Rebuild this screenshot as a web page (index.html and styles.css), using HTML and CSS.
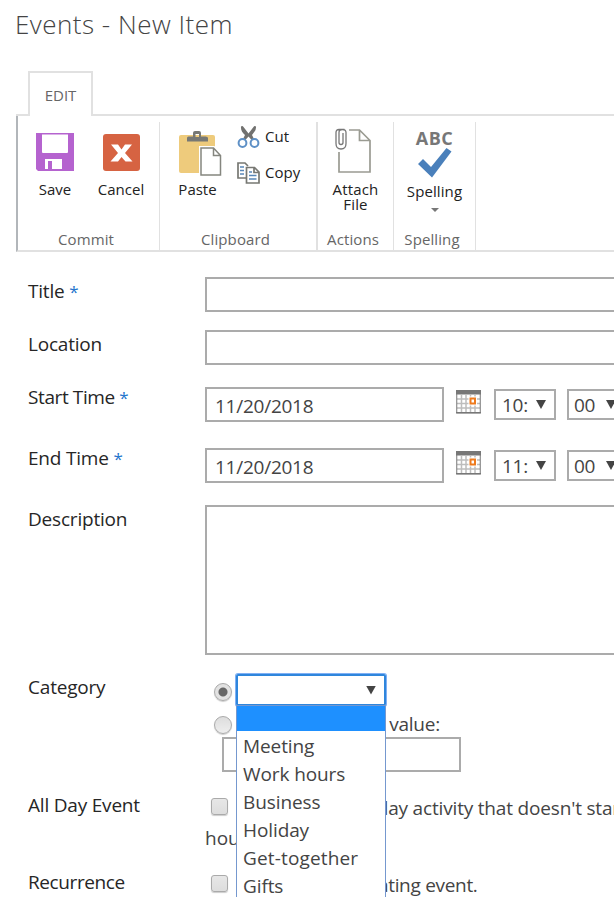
FILE: index.html
```html
<!DOCTYPE html>
<html lang="en">
<head>
<meta charset="utf-8">
<title>Events - New Item</title>
<link rel="stylesheet" href="styles.css">
</head>
<body>
<svg class="defs" width="0" height="0">
  <symbol id="calendar" viewBox="0 0 25 24">
    <path fill="#fff" d="M1 1h23v22H1z"/>
    <path fill="none" stroke="#bdbdbd" stroke-width="1.5" d="M5.5 5v17M10 5v17M14.500 5v17M19 5v17M1 9h23M1 13.500h23M1 18h23"/>
    <path fill="none" stroke="#777" d="M.75.75h23.500v22H.75z"/>
    <path fill="#777" d="M0 0h25v4.500H0zM0 22h25v1.500H0z"/>
    <path fill="#fff" stroke="#fff" stroke-width="4" d="M14.500 8.500h4.500v5h-4.500z"/>
    <path fill="#fff" stroke="#ee7b1e" stroke-width="2" d="M14.500 8.500h4.500v5h-4.500z"/>
  </symbol>
</svg>
<h1 class="page-title">Events - New Item</h1>
<nav class="tabs"><div class="tab">EDIT</div></nav>
<section class="ribbon">
  <div class="group commit">
    <div class="tools">
      <div class="tool save">
        <svg width="40" height="40" viewBox="0 0 40 40"><path fill="#b563cf" d="M1 1h38v38H3l-2-2z"/><path fill="#fff" d="M7 2.500h26v17.500q0 1-1 1H8q-1 0-1-1zM10 27h17v10H17v-8h-4v8h-3z"/></svg>
        <span>Save</span>
      </div>
      <div class="tool cancel">
        <svg width="40" height="40" viewBox="0 0 40 40"><rect x="2" y="2" width="37" height="37" rx="3" fill="#d66342"/><path fill="#fff" d="M10 12.500h7l3.500 5 3.500-5h7L24 21l7.500 8.500h-7L20.500 25 17 29.500h-7.500L17 21z"/></svg>
        <span>Cancel</span>
      </div>
    </div>
    <div class="caption">Commit</div>
  </div>
  <div class="group clipboard">
    <div class="tools">
      <div class="tool paste">
        <svg width="44" height="46" viewBox="0 0 44 46"><rect x="0" y="4" width="36" height="38" rx="2" fill="#eecb7c"/><path fill="#777874" fill-rule="evenodd" d="M8 10.500V7q0-1.500 1.500-1.500H14V2q0-2 2-2h4q2 0 2 2v3.500h4.500Q29 5.500 29 7v3.500zM16.500 3v3h3.500V3z"/><path fill="#fff" stroke="#fff" stroke-width="4" d="M22 17h12.500l7 7.500V44H22z"/><path fill="#fff" stroke="#85867f" stroke-width="1.500" d="M22 17h12.500l7 7.500V44H22zM34.500 17v7.500h7"/></svg>
        <span>Paste</span>
      </div>
      <div class="small-tools">
        <div class="small-tool">
          <svg width="23" height="24" viewBox="0 0 23 24"><path fill="#71716f" d="M4 1.500q1.500-1 2.500.5l5 6.500 5-6.500q1-1.500 2.500-.5.500 4-4 8.500l2.500 5-2 1-4-4.500-4 4.500-2-1L8 10Q3.500 6 4 1.500z"/><g fill="#fff" stroke="#5e90c6" stroke-width="2"><circle cx="5.500" cy="18" r="3.900"/><circle cx="17.500" cy="18" r="3.900"/></g></svg>
          <span>Cut</span>
        </div>
        <div class="small-tool">
          <svg width="23" height="24" viewBox="0 0 23 24"><g fill="#fff" stroke="#777873" stroke-width="1.700"><path d="M9 17H1V2h7l3 3"/><path d="M9.500 6.500h8l4.500 4.500v11H9.500zM17 6.500v5h5"/></g><path fill="none" stroke="#5887b8" stroke-width="1.700" d="M3 6h4M3 9.500h4M3 13h4M12 11h3M12 14.500h7.500M12 18h7.500"/></svg>
          <span>Copy</span>
        </div>
      </div>
    </div>
    <div class="caption">Clipboard</div>
  </div>
  <div class="group actions">
    <div class="tools">
      <div class="tool attach">
        <svg width="38" height="46" viewBox="0 0 38 46"><path fill="#fff" stroke="#9a9b92" stroke-width="1.700" d="M4 24v20h31V12.500L24.500 2H14M24.500 2v10.500H35"/><path fill="none" stroke="#777" stroke-width="1.300" d="M9.500 1.500H4q-3 0-3 3v11q0 5.500 5 5.500t5-5.500v-11q0-3-3.500-3T4 4.500v10q0 2 2 2t2-2V5"/></svg>
        <span class="tight">Attach</span>
        <span class="tight">File</span>
      </div>
    </div>
    <div class="caption">Actions</div>
  </div>
  <div class="group spelling">
    <div class="tools">
      <div class="tool spell">
        <b class="abc">ABC</b>
        <svg width="34" height="30" viewBox="0 0 34 30"><path fill="#4a80bb" d="M0 16l5-5 8 8L28.500 0l5 3.500L14 29.500z"/></svg>
        <span>Spelling</span>
        <i class="caret"></i>
      </div>
    </div>
    <div class="caption">Spelling</div>
  </div>
</section>
<main class="form">
  <div class="row single"><label>Title <em>*</em></label><div class="text-box wide"></div></div>
  <div class="row single"><label>Location</label><div class="text-box wide"></div></div>
  <div class="row time"><label class="narrow">Start Time <em>*</em></label>
    <div class="date-line"><div class="text-box date">11/20/2018</div><svg class="cal" width="25" height="24"><use href="#calendar"/></svg><div class="select hour">10:<i class="arrow"></i></div><div class="select minute">00<i class="arrow"></i></div></div>
  </div>
  <div class="row time"><label>End Time <em>*</em></label>
    <div class="date-line"><div class="text-box date">11/20/2018</div><svg class="cal" width="25" height="24"><use href="#calendar"/></svg><div class="select hour">11:<i class="arrow"></i></div><div class="select minute">00<i class="arrow"></i></div></div>
  </div>
  <div class="row description"><label>Description</label><div class="text-area"></div></div>
  <div class="row category"><label>Category</label>
    <div class="choices">
      <div class="choice first"><span class="radio on"></span>
        <div class="combo"><i class="arrow"></i>
          <ul class="menu">
            <li class="active"></li>
            <li>Meeting</li>
            <li>Work hours</li>
            <li>Business</li>
            <li>Holiday</li>
            <li class="loose">Get-together</li>
            <li>Gifts</li>
          </ul>
        </div>
      </div>
      <div class="choice second"><span class="radio"></span><span class="own">Specify your own value:</span></div>
      <div class="text-box own-box"></div>
    </div>
  </div>
  <div class="row allday"><label>All Day Event</label>
    <div class="check-text"><span class="checkbox"></span><span class="allday-text">Make this an all-day activity that doesn't start or end at a specific</span><br><span>hour.</span></div>
  </div>
  <div class="row recurrence"><label class="narrow">Recurrence</label>
    <div class="check-text"><span class="checkbox"></span><span class="rec-text">Make this a repeating event.</span></div>
  </div>
</main>
</body>
</html>
```
FILE: styles.css
```css
* { box-sizing: border-box; }
html { height: 897px; overflow: hidden; }
body {
  margin: 0;
  width: 614px;
  height: 897px;
  overflow: hidden;
  background: #fff;
  color: #444;
  font-family: "Open Sans", "Noto Sans", sans-serif;
  font-size: 19px;
}
.defs { position: absolute; }
svg { display: block; flex: none; }
.page-title {
  margin: 0;
  padding: 4px 0 0 15px;
  height: 71px;
  font-size: 26px;
  line-height: 40px;
  font-weight: 300;
  letter-spacing: .48px;
  white-space: nowrap;
}

/* Ribbon */
.tabs { height: 45px; padding-left: 28px; display: flex; position: relative; }
.tabs::before { content: ""; position: absolute; left: 16px; width: 12px; bottom: 0; height: 2px; background: #e1e1e1; }
.tabs::after { content: ""; flex: 1; border-bottom: 2px solid #e1e1e1; }
.tab {
  width: 65px;
  border: 2px solid #e1e1e1;
  border-bottom: 0;
  text-align: center;
  font-size: 15px;
  line-height: 44px;
  letter-spacing: -.1px;
  color: #666;
}
.ribbon {
  display: flex;
  height: 136px;
  margin-left: 16px;
  border-left: 2px solid #b2b6ba;
  border-bottom: 2px solid #e1e1e1;
}
.group {
  display: flex;
  flex-direction: column;
  justify-content: space-between;
  margin-top: 6px;
  border-right: 1px solid #e1e1e1;
  font-size: 15px;
  color: #222;
}
.commit { width: 142px; }
.clipboard { width: 158px; border-right-width: 2px; }
.actions { width: 76px; }
.spelling { width: 82px; }
.tools { display: flex; }
.tool { display: flex; flex-direction: column; align-items: center; white-space: nowrap; }
.tool span { line-height: 20px; }
.caption { color: #666; line-height: 21px; padding-right: 5px; text-align: center; font-size: 15px; letter-spacing: .1px; }
.save { width: 66px; margin-left: 4px; padding: 10px 0 0; }
.cancel { width: 66px; padding-top: 10px; }
.save span, .cancel span { margin-top: 7px; }
.paste { width: 44px; margin-left: 19px; padding-top: 9px; }
.paste span { margin: 2px 7px 0 0; }
.small-tools { display: flex; flex-direction: column; padding: 3px 0 0 14px; gap: 12px; }
.small-tool { display: flex; align-items: center; gap: 5px; height: 24px; }
.small-tool span { line-height: 20px; margin-top: -2px; }
.attach { width: 75px; padding-top: 6px; }
.attach svg { margin-right: 4px; margin-bottom: 8px; }
.tool .tight { line-height: 15px; letter-spacing: .15px; }
.spell { width: 81px; padding-top: 6px; }
.abc { color: #777; font-size: 18px; line-height: 21px; font-weight: 700; letter-spacing: .5px; }
.spell svg { margin-top: -1px; }
.spell span { margin-top: 3px; letter-spacing: .1px; }
.caret { border: 4px solid transparent; border-top-color: #777; border-bottom: 0; margin-top: 7px; }

/* Form */
.form { padding: 25px 0 0 28px; }
.row { display: grid; grid-template-columns: 177px minmax(0, 1fr); align-items: start; }
.single { height: 53px; }
.time { height: 61px; }
.description { height: 168px; }
.category { height: 118px; }
.allday { height: 77px; }
.recurrence { height: 29px; }
.row label { line-height: 28px; color: #262626; white-space: nowrap; letter-spacing: -.2px; }
.row .narrow { letter-spacing: -.4px; }
em { font-style: normal; color: #2474cc; font-size: 17px; line-height: 20px; }
.text-box { height: 35px; border: 2px solid #ababab; background: #fff; }
.wide { border-right: 0; }
.date-line { display: flex; margin-top: 4px; overflow: hidden; }
.date { width: 239px; flex: none; line-height: 34px; padding-left: 8px; letter-spacing: -.25px; }
.cal { margin: 3px 13px 0 12px; }
.select { display: flex; flex: none; align-items: center; justify-content: space-between; height: 31px; margin-top: 2px; border: 2px solid #ababab; padding: 0 8px 0 6px; letter-spacing: -.3px; }
.hour { width: 62px; }
.minute { width: 62px; margin-left: 11px; padding-right: 11px; padding-left: 5px; }
.arrow { width: 10px; height: 9px; background: #444; clip-path: polygon(0 0, 100% 0, 50% 100%); }
.text-area { height: 150px; border: 2px solid #ababab; border-right: 0; }
.choices { padding: 1px 0 0 9px; }
.choice { display: flex; }
.radio { flex: none; width: 18px; height: 18px; border-radius: 50%; border: 1px solid #aaa; background: linear-gradient(#ddd, #eee); box-shadow: 0 1px 1px #ccc; margin-top: 9px; }
.radio.on { background: radial-gradient(circle, #666 0 4px, #e2e2e2 5px); }
.first { height: 33px; }
.second { height: 30px; }
.combo { position: relative; display: flex; align-items: center; justify-content: flex-end; width: 150px; height: 32px; margin-left: 4px; padding-right: 8px; border: 2px solid #2f86dc; border-radius: 2px; box-shadow: 0 0 0 1px #7fb0f5; }
.menu { position: absolute; z-index: 2; top: 29px; left: -2px; width: 150px; height: 193px; margin: 0; padding: 0; list-style: none; background: #fff; border: 1px solid #7598cf; border-bottom: 0; }
.menu li { height: 28px; line-height: 28px; padding-left: 6px; white-space: nowrap; letter-spacing: -.1px; }
.menu .loose { letter-spacing: .15px; }
.menu .active { height: 25px; margin-bottom: 1px; background: #1e90ff; }
.own { margin-left: 6px; line-height: 35px; white-space: nowrap; letter-spacing: -.25px; }
.own-box { width: 239px; margin-left: 8px; }
.check-text { line-height: 30px; white-space: nowrap; padding-top: 2px; overflow: hidden; }
.checkbox { display: inline-block; width: 17px; height: 17px; border: 1px solid #aaa; border-radius: 3px; background: linear-gradient(#e7e7e7, #ddd); box-shadow: 0 1px 1px #ccc; margin: 0 9px 0 6px; vertical-align: 0; }
.allday-text { margin-left: -1px; letter-spacing: -.15px; word-spacing: -.2px; }
.rec-text { letter-spacing: -.33px; word-spacing: .2px; margin-left: -1px; }
```
